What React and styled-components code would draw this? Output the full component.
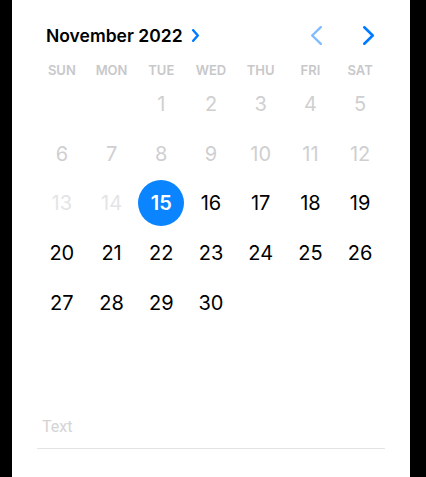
import React from 'react';
import styled, { createGlobalStyle } from 'styled-components';

const GlobalStyle = createGlobalStyle`
  html, body {
    margin: 0;
    padding: 0;
    height: 100%;
    background: #000;
  }
  #root {
    height: 100%;
  }
  * {
    box-sizing: border-box;
  }
`;

const Screen = styled.div`
  display: flex;
  height: 100%;
  padding: 0 16px 0 12px;
`;

const Sheet = styled.main`
  flex: 1;
  background: #fff;
  padding: 18px 25px 0;
  font-family: Inter, "Noto Sans", sans-serif;
`;

const Header = styled.header`
  display: flex;
  align-items: center;
  justify-content: space-between;
  height: 34px;
  padding: 0 10px 0 9px;
`;

const MonthButton = styled.button`
  display: flex;
  align-items: center;
  gap: 8px;
  padding: 0;
  border: 0;
  background: none;
  font-family: inherit;
  font-size: 17.5px;
  font-weight: 600;
  letter-spacing: 0;
  color: #000;
`;

const TitleChevron = styled.span`
  display: flex;
  color: #007aff;
`;

const Nav = styled.div`
  display: flex;
  align-items: center;
  gap: 39px;
`;

const NavButton = styled.button`
  display: flex;
  padding: 0;
  border: 0;
  background: none;
  color: ${p => (p.$dim ? 'rgba(0, 122, 255, 0.5)' : '#007aff')};
`;

const Weekdays = styled.div`
  display: grid;
  grid-template-columns: repeat(7, 1fr);
  margin-top: 9px;
  height: 18px;
`;

const Weekday = styled.span`
  text-align: center;
  font-size: 13px;
  font-weight: 600;
  line-height: 18px;
  color: #c8c8ca;
`;

const Days = styled.div`
  display: grid;
  grid-template-columns: repeat(7, 1fr);
  grid-auto-rows: 49.7px;
`;

const DayCell = styled.div`
  display: flex;
  align-items: center;
  justify-content: center;
`;

const dayColor = p => {
  if (p.$selected) return '#fff';
  if (p.$tone === 'faint') return '#e4e4e6';
  if (p.$tone === 'past') return '#cfcfd1';
  return '#000';
};

const DayNumber = styled.span`
  display: flex;
  align-items: center;
  justify-content: center;
  width: 46px;
  height: 46px;
  border-radius: 50%;
  font-size: 20px;
  font-weight: ${p => (p.$selected ? 600 : 400)};
  color: ${dayColor};
  background: ${p => (p.$selected ? '#0a84ff' : 'transparent')};
`;

const Field = styled.label`
  display: block;
  margin-top: 88px;
  padding: 0 5px 9px;
  border-bottom: 1px solid #e4e4e4;
`;

const Input = styled.input`
  display: block;
  width: 100%;
  padding: 0;
  border: 0;
  outline: none;
  background: none;
  font-family: Roboto, "Noto Sans", sans-serif;
  font-size: 16px;
  line-height: 24px;
  height: 24px;
  color: #222;

  &::placeholder {
    color: #d4d4d4;
  }
`;

const Chevron = ({ dir = 'right', w = 12, h = 18, stroke = 2.6 }) => {
  const a = stroke / 2 + 1;
  const b = w - stroke / 2 - 1;
  const pts =
    dir === 'right'
      ? `${a},${stroke / 2} ${b},${h / 2} ${a},${h - stroke / 2}`
      : `${b},${stroke / 2} ${a},${h / 2} ${b},${h - stroke / 2}`;
  return (
    <svg width={w} height={h} viewBox={`0 0 ${w} ${h}`} fill="none">
      <polyline
        points={pts}
        stroke="currentColor"
        strokeWidth={stroke}
        strokeLinecap="round"
        strokeLinejoin="round"
      />
    </svg>
  );
};

const WEEKDAYS = ['SUN', 'MON', 'TUE', 'WED', 'THU', 'FRI', 'SAT'];
const FIRST_WEEKDAY = 2; // November 1, 2022 is a Tuesday
const DAYS_IN_MONTH = 30;
const TODAY = 15;

// Days earlier in today's week fade further than older ones.
const toneOf = day => {
  if (day >= TODAY) return 'current';
  const week = Math.floor((day + FIRST_WEEKDAY - 1) / 7);
  const todayWeek = Math.floor((TODAY + FIRST_WEEKDAY - 1) / 7);
  return week === todayWeek ? 'faint' : 'past';
};

export default function App() {
  const cells = [
    ...Array.from({ length: FIRST_WEEKDAY }, () => null),
    ...Array.from({ length: DAYS_IN_MONTH }, (_, i) => i + 1),
  ];

  return (
    <>
      <GlobalStyle />
      <Screen>
        <Sheet>
          <Header>
            <MonthButton type="button">
              November 2022
              <TitleChevron>
                <Chevron w={9} h={13} stroke={2.4} />
              </TitleChevron>
            </MonthButton>
            <Nav>
              <NavButton type="button" $dim aria-label="Previous month">
                <Chevron dir="left" w={13} h={19} stroke={2.4} />
              </NavButton>
              <NavButton type="button" aria-label="Next month">
                <Chevron w={13} h={19} stroke={2.6} />
              </NavButton>
            </Nav>
          </Header>

          <Weekdays>
            {WEEKDAYS.map(d => (
              <Weekday key={d}>{d}</Weekday>
            ))}
          </Weekdays>

          <Days>
            {cells.map((day, i) => (
              <DayCell key={i}>
                {day && (
                  <DayNumber $tone={toneOf(day)} $selected={day === TODAY}>
                    {day}
                  </DayNumber>
                )}
              </DayCell>
            ))}
          </Days>

          <Field>
            <Input placeholder="Text" />
          </Field>
        </Sheet>
      </Screen>
    </>
  );
}
